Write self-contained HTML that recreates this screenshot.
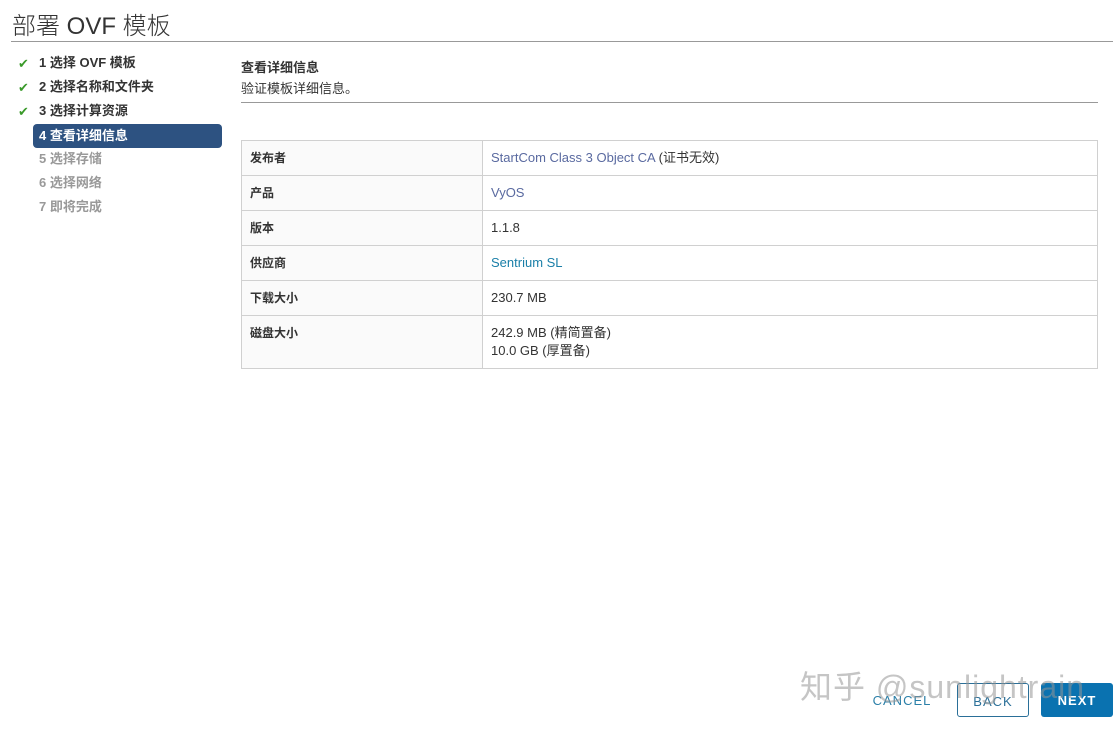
<!DOCTYPE html>
<html><head><meta charset="utf-8"><style>
body{margin:0;width:1120px;height:734px;background:#fff;font-family:"Liberation Sans","Noto Sans CJK SC",sans-serif;color:#333;position:relative;overflow:hidden}
.abs{position:absolute}
h1{position:absolute;left:12px;top:6px;margin:0;font-weight:300;font-size:24px;color:#333;font-family:"Liberation Sans","Noto Sans CJK SC",sans-serif}
.hr{position:absolute;left:11px;top:41px;width:1102px;height:1px;background:#999}
.step{position:absolute;left:39px;font-size:13px;font-weight:bold;height:20px;line-height:20px}
.chk{position:absolute;left:18px;color:#3a9a2a;font-size:13px}
.act{position:absolute;left:33px;top:124px;width:189px;height:24px;background:#2d5281;border-radius:4px}
table{position:absolute;left:241px;top:140px;width:857px;border-collapse:collapse;font-size:13px}
td{border:1px solid #d0d0d0;padding:8px 8px;vertical-align:top;line-height:18px;height:18px}
td.k{width:224px;background:#fafafa;font-weight:bold;font-size:12px}
.l{color:#5a6aa0}
.btn{position:absolute;top:683px;height:34px;line-height:36px;text-align:center;font-size:13px;letter-spacing:1px;border-radius:3px}
</style></head><body>
<h1>部署 OVF 模板</h1>
<div class="hr"></div>
<span class="chk" style="top:56px">✔</span><span class="chk" style="top:80px">✔</span><span class="chk" style="top:104px">✔</span>
<div class="step" style="top:53px">1 选择 OVF 模板</div>
<div class="step" style="top:77px">2 选择名称和文件夹</div>
<div class="step" style="top:101px">3 选择计算资源</div>
<div class="act"></div>
<div class="step" style="top:126px;color:#fff">4 查看详细信息</div>
<div class="step" style="top:149px;color:#999">5 选择存储</div>
<div class="step" style="top:173px;color:#999">6 选择网络</div>
<div class="step" style="top:197px;color:#999">7 即将完成</div>
<div class="abs" style="left:241px;top:57px;font-size:13px;font-weight:bold">查看详细信息</div>
<div class="abs" style="left:241px;top:78px;font-size:13px">验证模板详细信息。</div>
<div class="abs" style="left:241px;top:102px;width:857px;height:1px;background:#999"></div>
<table>
<tr><td class="k">发布者</td><td><span class="l">StartCom Class 3 Object CA</span> (证书无效)</td></tr>
<tr><td class="k">产品</td><td class="l">VyOS</td></tr>
<tr><td class="k">版本</td><td>1.1.8</td></tr>
<tr><td class="k">供应商</td><td style="color:#1a7fa8">Sentrium SL</td></tr>
<tr><td class="k">下载大小</td><td>230.7 MB</td></tr>
<tr><td class="k">磁盘大小</td><td style="line-height:18px;height:34px">242.9 MB (精简置备)<br>10.0 GB (厚置备)</td></tr>
</table>
<div class="btn" style="left:862px;width:80px;color:#2a7fa8">CANCEL</div>
<div class="btn" style="left:957px;width:70px;border:1px solid #2a6f98;color:#2a6f98;height:32px">BACK</div>
<div class="btn" style="left:1041px;width:72px;background:#0a72b0;color:#fff;font-weight:bold">NEXT</div>
<div class="abs" style="left:800px;top:662px;font-size:32px;letter-spacing:1px;color:rgba(150,150,150,0.55)">知乎 @sunlightrain</div>
</body></html>
